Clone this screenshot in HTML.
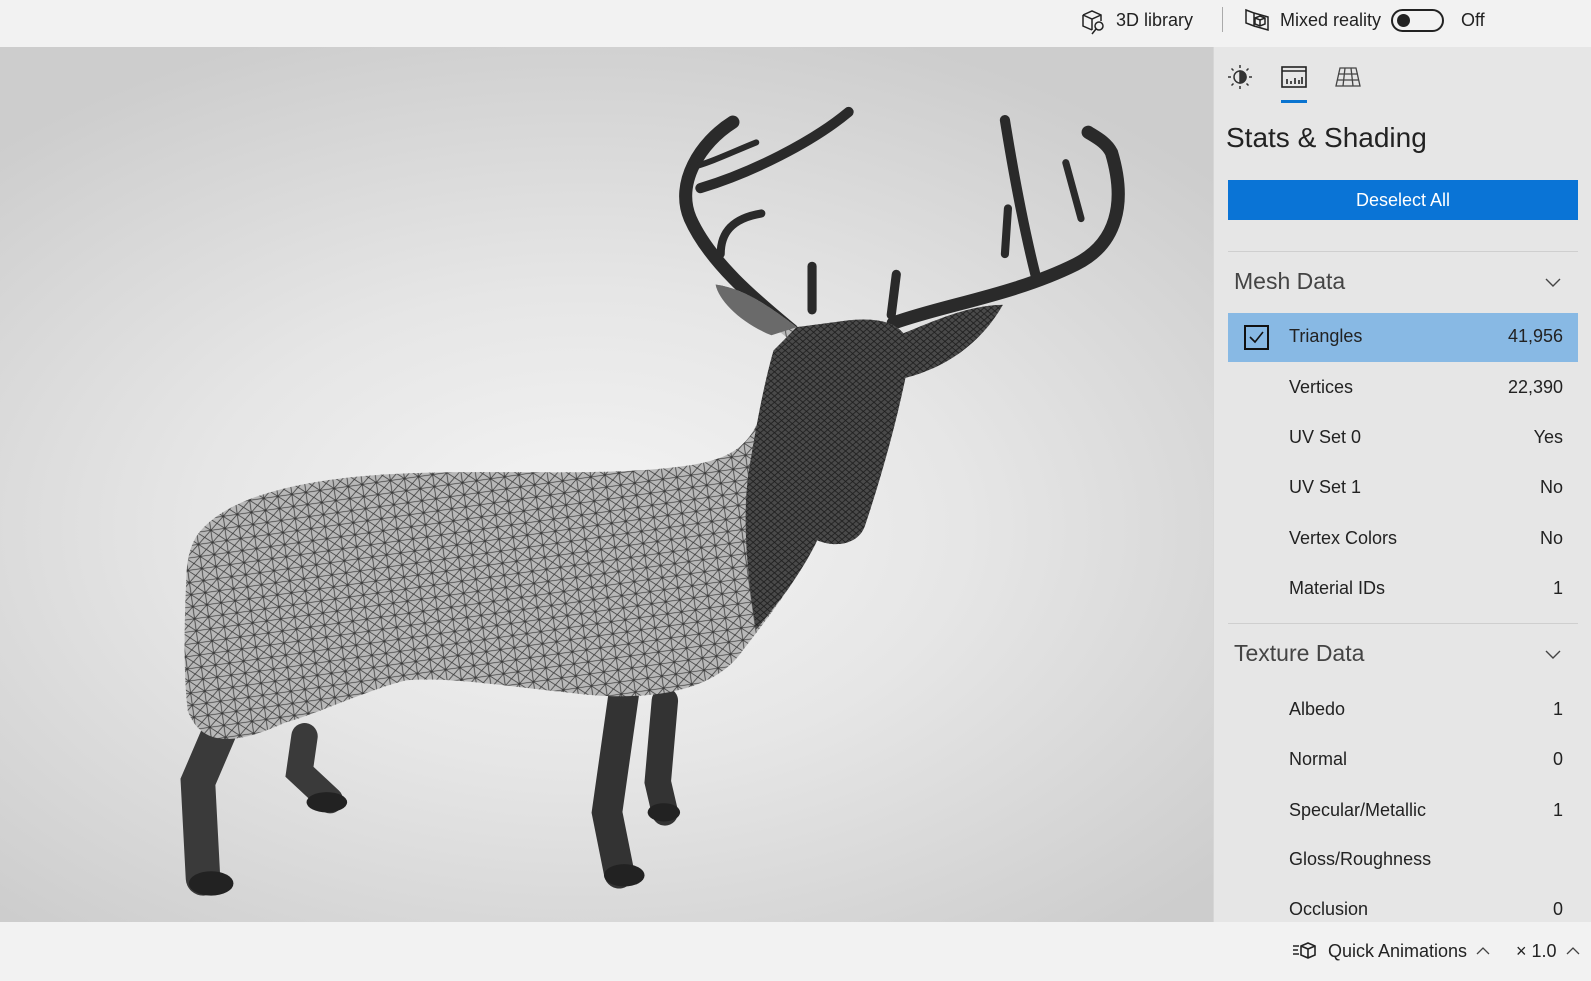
<!DOCTYPE html>
<html><head><meta charset="utf-8">
<style>
*{margin:0;padding:0;box-sizing:border-box}
body{width:1591px;height:981px;overflow:hidden;background:#f2f2f2;font-family:"Segoe UI","Liberation Sans",sans-serif;color:#222;position:relative}
.abs{position:absolute}
.top{left:0;top:0;width:1591px;height:47px;background:#f2f2f2}
.view{left:0;top:47px;width:1213px;height:875px;background:radial-gradient(ellipse 70% 60% at 48% 55%,#f4f4f4 0%,#e6e6e6 45%,#cdcdcd 100%)}
.panel{left:1213px;top:47px;width:378px;height:875px;background:#e6e6e6;border-left:1px solid #d6d6d6}
.bottom{left:0;top:922px;width:1591px;height:59px;background:#f2f2f2}
.t{font-size:18px;white-space:nowrap}
.row{position:absolute;left:1228px;width:350px;height:49px;font-size:18px}
.row .l{position:absolute;left:61px;top:13px}
.row .v{position:absolute;right:15px;top:13px}
.hd{position:absolute;left:1234px;font-size:23px;color:#444}
.sep{position:absolute;left:1228px;width:350px;height:1px;background:#cfcfcf}
.chev{position:absolute;left:1545px;width:16px;height:16px}
</style></head><body>
<div class="abs top"></div>
<svg class="abs" style="left:1080px;top:8px" width="28" height="28" viewBox="0 0 28 28" fill="none" stroke="#222" stroke-width="1.5"><path d="M3 7l9-4 9 4v6M3 7v11l9 4M3 7l9 4 9-4M12 11v11"/><circle cx="19" cy="18" r="4"/><path d="M16 21l-4 5"/></svg>
<div class="abs t" style="left:1116px;top:10px">3D library</div>
<div class="abs" style="left:1222px;top:7px;width:1px;height:25px;background:#aaa"></div>
<svg class="abs" style="left:1244px;top:7px" width="28" height="26" viewBox="0 0 28 26" fill="none" stroke="#222" stroke-width="1.5"><path d="M2 3l8 3v13l-8-3zM10 6l14 4v13l-14-4"/><path d="M11 11l5-2 5 2v6l-5 2-5-2zM11 11l5 2 5-2M16 13v6"/></svg>
<div class="abs t" style="left:1280px;top:10px">Mixed reality</div>
<div class="abs" style="left:1391px;top:9px;width:53px;height:23px;border:2px solid #222;border-radius:12px"></div>
<div class="abs" style="left:1397px;top:14px;width:13px;height:13px;border-radius:50%;background:#222"></div>
<div class="abs t" style="left:1461px;top:10px">Off</div>

<div class="abs view"></div>
<svg class="abs" style="left:0;top:47px" width="1213" height="875" viewBox="0 46 1195 862">
<defs>
<pattern id="mesh" width="14" height="12" patternUnits="userSpaceOnUse" patternTransform="rotate(-8)">
<rect width="14" height="12" fill="#b8b8b8"/>
<path d="M0 0L14 12M14 0L0 12M0 6H14M7 0V12" stroke="#3a3a3a" stroke-width="0.8"/>
</pattern>
<pattern id="dmesh" width="7" height="6" patternUnits="userSpaceOnUse">
<rect width="7" height="6" fill="#4a4a4a"/>
<path d="M0 0L7 6M7 0L0 6" stroke="#1e1e1e" stroke-width="0.8"/>
</pattern>
</defs>
<g stroke="#2a2a2a" stroke-linecap="round" fill="none">
<path d="M780 325C750 300 700 260 680 215C665 180 690 140 722 120" stroke-width="13"/>
<path d="M690 185C740 170 800 140 836 110" stroke-width="10"/>
<path d="M710 250C710 230 720 215 750 210" stroke-width="8"/>
<path d="M680 165C700 160 720 150 745 140" stroke-width="6"/>
<path d="M800 305L800 262" stroke-width="9"/>
<path d="M880 318C930 300 1000 290 1060 260C1100 240 1110 200 1095 150C1090 140 1080 135 1072 130" stroke-width="13"/>
<path d="M1020 270C1010 230 1000 180 990 118" stroke-width="10"/>
<path d="M990 250L993 205" stroke-width="8"/>
<path d="M1065 215L1050 160" stroke-width="7"/>
<path d="M878 310L883 270" stroke-width="9"/>
<path d="M300 725L295 760L325 788" stroke-width="26" stroke="#3a3a3a"/>
<path d="M655 690L648 770L655 800" stroke-width="26" stroke="#333"/>
<path d="M615 680L598 800L610 860" stroke-width="30" stroke="#333"/>
<path d="M225 700L195 770L200 865" stroke-width="34" stroke="#3a3a3a"/>
</g>
<g fill="#222">
<ellipse cx="208" cy="870" rx="22" ry="12"/>
<ellipse cx="615" cy="862" rx="20" ry="11"/>
<ellipse cx="322" cy="790" rx="20" ry="10"/>
<ellipse cx="654" cy="800" rx="16" ry="9"/>
</g>
<path d="M200 520C230 488 300 470 400 466C500 462 600 470 680 458C720 452 742 438 752 400C756 370 762 345 775 332L760 320C730 312 708 296 705 280C735 284 762 305 785 322L830 316C860 312 880 316 890 328C920 316 955 300 988 300C965 340 930 362 892 372C882 420 868 470 852 518C846 535 825 540 805 532C792 560 762 602 732 640C700 688 620 690 560 682C500 676 440 666 400 670C360 680 320 700 280 712C240 730 200 740 185 700C180 660 182 600 184 560C186 540 192 528 200 520Z" fill="url(#mesh)"/>
<path d="M740 450C745 420 752 380 762 345L785 322L830 316C860 312 880 316 890 328C920 316 955 300 988 300C965 340 930 362 892 372C882 420 868 470 852 518C846 535 825 540 805 532C792 560 770 590 745 620C735 560 730 500 740 450Z" fill="url(#dmesh)"/>
<path d="M705 280C735 284 762 305 785 322L760 330C730 318 708 296 705 280Z" fill="#6a6a6a"/>
</svg>

<div class="abs panel"></div>
<svg class="abs" style="left:1226px;top:63px" width="28" height="28" viewBox="0 0 28 28" fill="none" stroke="#333" stroke-width="1.5"><circle cx="14" cy="14" r="6"/><path d="M14 8a6 6 0 0 1 0 12z" fill="#333"/><path d="M14 2v3M14 23v3M2 14h3M23 14h3M5.5 5.5l2 2M20.5 20.5l2 2M5.5 22.5l2-2M20.5 7.5l2-2"/></svg>
<svg class="abs" style="left:1280px;top:65px" width="28" height="24" viewBox="0 0 28 24" fill="none" stroke="#222" stroke-width="1.6"><rect x="2" y="2" width="24" height="20"/><path d="M2 6h24M7 19v-5M11 19v-3M15 19v-6M19 19v-4M22 19v-7"/></svg>
<div class="abs" style="left:1281px;top:100px;width:26px;height:3px;background:#0a74d0"></div>
<svg class="abs" style="left:1334px;top:65px" width="28" height="24" viewBox="0 0 28 24" fill="none" stroke="#444" stroke-width="1.3"><path d="M6 3h16l4 18H2zM4 9h20M3 15h22M11 3l-2 18M17 3l2 18"/></svg>
<div class="abs" style="left:1226px;top:122px;font-size:28px;color:#222">Stats &amp; Shading</div>
<div class="abs" style="left:1228px;top:180px;width:350px;height:40px;background:#0a74d6;color:#fff;font-size:18px;text-align:center;line-height:40px">Deselect All</div>
<div class="sep" style="top:251px"></div>
<div class="hd" style="top:268px">Mesh Data</div>
<svg class="chev" style="top:275px" viewBox="0 0 16 16"><path d="M1 4l7 7 7-7" fill="none" stroke="#444" stroke-width="1.4"/></svg>
<div class="row" style="top:313px;background:#88b9e4"><div class="abs" style="left:16px;top:12px;width:25px;height:25px;border:2.5px solid #111"></div><svg class="abs" style="left:20px;top:16px" width="17" height="17" viewBox="0 0 17 17"><path d="M2 8l5 5 8-10" fill="none" stroke="#111" stroke-width="1.6"/></svg><span class="l">Triangles</span><span class="v">41,956</span></div>
<div class="row" style="top:364px"><span class="l">Vertices</span><span class="v">22,390</span></div>
<div class="row" style="top:414px"><span class="l">UV Set 0</span><span class="v">Yes</span></div>
<div class="row" style="top:464px"><span class="l">UV Set 1</span><span class="v">No</span></div>
<div class="row" style="top:515px"><span class="l">Vertex Colors</span><span class="v">No</span></div>
<div class="row" style="top:565px"><span class="l">Material IDs</span><span class="v">1</span></div>
<div class="sep" style="top:623px"></div>
<div class="hd" style="top:640px">Texture Data</div>
<svg class="chev" style="top:647px" viewBox="0 0 16 16"><path d="M1 4l7 7 7-7" fill="none" stroke="#444" stroke-width="1.4"/></svg>
<div class="row" style="top:686px"><span class="l">Albedo</span><span class="v">1</span></div>
<div class="row" style="top:736px"><span class="l">Normal</span><span class="v">0</span></div>
<div class="row" style="top:787px"><span class="l">Specular/Metallic</span><span class="v">1</span></div>
<div class="row" style="top:836px"><span class="l">Gloss/Roughness</span><span class="v"></span></div>
<div class="row" style="top:886px"><span class="l">Occlusion</span><span class="v">0</span></div>

<div class="abs bottom"></div>
<svg class="abs" style="left:1292px;top:941px" width="26" height="20" viewBox="0 0 26 20" fill="none" stroke="#222" stroke-width="1.6"><path d="M1 5h6M1 9h5M1 13h6M9 5l7-3 7 3v9l-7 3-7-3zM9 5l7 3 7-3M16 8v9"/></svg>
<div class="abs t" style="left:1328px;top:941px">Quick Animations</div>
<svg class="abs" style="left:1476px;top:946px" width="14" height="10" viewBox="0 0 14 10"><path d="M1 8l6-6 6 6" fill="none" stroke="#444" stroke-width="1.3"/></svg>
<div class="abs t" style="left:1516px;top:941px">× 1.0</div>
<svg class="abs" style="left:1566px;top:946px" width="14" height="10" viewBox="0 0 14 10"><path d="M1 8l6-6 6 6" fill="none" stroke="#444" stroke-width="1.3"/></svg>
</body></html>
